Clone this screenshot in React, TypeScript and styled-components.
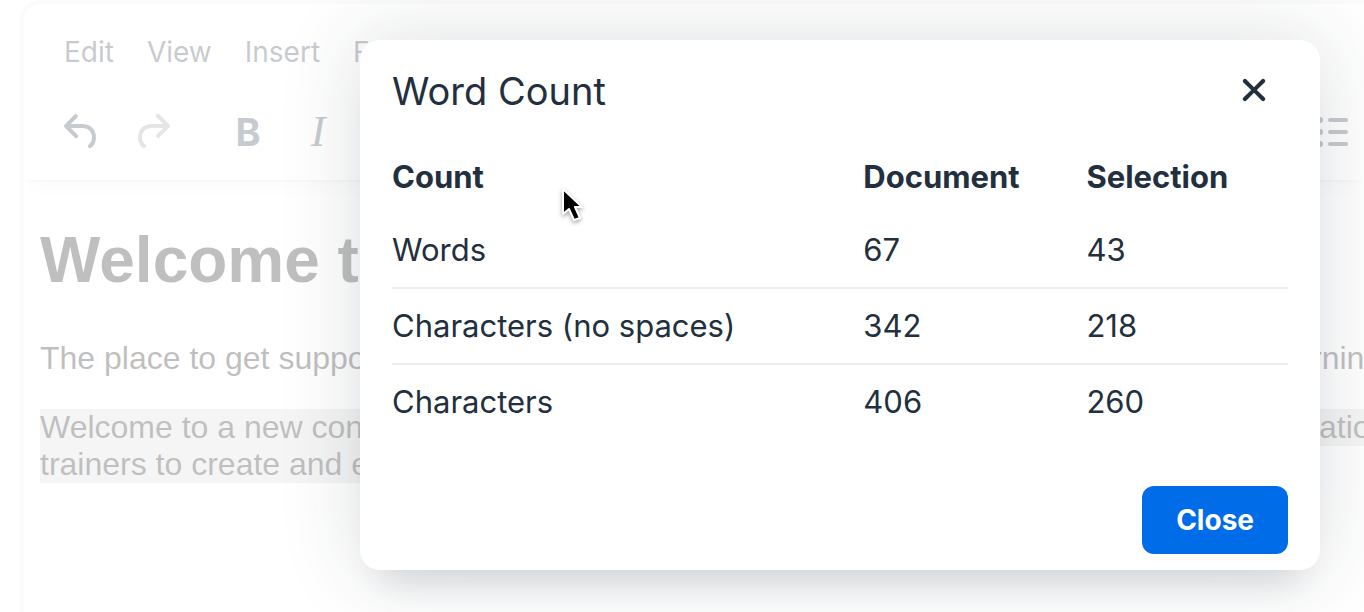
import React from "react";
import styled, { createGlobalStyle } from "styled-components";

const ink = "#222f3e";

const GlobalStyle = createGlobalStyle`
  *, *::before, *::after { box-sizing: border-box; }
  html { overflow: hidden; background: #fff; }
  body {
    margin: 0;
    color: ${ink};
    font-family: Inter, "Liberation Sans", sans-serif;
  }
`;

const Page = styled.div`
  position: relative;
  display: flex;
  min-height: 100vh;
  overflow: hidden;
`;

const Editor = styled.main`
  flex: 1;
  min-width: 0;
  margin-left: 20px;
  border: 4px solid #eee;
  border-width: 4px 0 0 4px;
  border-top-left-radius: 20px;
`;

const EditorHeader = styled.header`
  padding: 12px 0 4px 24px;
  box-shadow: 0 4px 4px -4px rgba(34, 47, 62, 0.2), 0 16px 16px -8px rgba(34, 47, 62, 0.07);
`;

const MenuBar = styled.nav`
  display: flex;
  height: 72px;
  padding-left: 16px;
  gap: 33px;
`;

const MenuButton = styled.button`
  padding: 0;
  border: 0;
  background: none;
  color: inherit;
  font: 400 28px/36px Inter, sans-serif;
`;

const Toolbar = styled.div`
  display: flex;
  align-items: center;
  height: 88px;
  padding-right: 4px;
`;

const ToolGroup = styled.div<{ $end?: boolean }>`
  display: flex;
  gap: 2px;
  margin-left: ${(p) => (p.$end ? "auto" : "0")};
  margin-right: ${(p) => (p.$end ? "0" : "28px")};
`;

const ToolButton = styled.button<{ $narrow?: boolean }>`
  display: flex;
  align-items: center;
  justify-content: center;
  width: ${(p) => (p.$narrow ? 56 : 68)}px;
  height: 68px;
  padding: 0;
  border: 0;
  background: none;
  color: inherit;

  &:disabled { opacity: 0.5; }
`;

const BoldMark = styled.b`
  font: 700 38px/48px Inter, sans-serif;
`;

const ItalicMark = styled.i`
  font: italic 400 44px/48px "Liberation Serif", serif;
`;

const Content = styled.article`
  padding: 42px 0 32px 16px;
  color: #000;
  font: 400 32px/37px "Liberation Sans", Arial, sans-serif;
`;

const Heading = styled.h1`
  margin: 0;
  font-size: 64px;
  line-height: 76px;
`;

const Paragraph = styled.p`
  margin: 32px 0 0;

  h1 + & { margin-top: 42px; }
`;

const Line = styled.span<{ $selected?: boolean; $short?: boolean }>`
  display: flex;
  justify-content: space-between;
  width: ${(p) => (p.$short ? "60%" : "auto")};
  background: ${(p) => (p.$selected ? "#d8d8d8" : "none")};
  white-space: nowrap;
`;

const Tail = styled.span<{ $width: number }>`
  width: ${(p) => p.$width}px;
  overflow: hidden;
`;

const Overlay = styled.div`
  position: absolute;
  inset: 0;
  display: flex;
  align-items: flex-start;
  justify-content: flex-end;
  padding: 40px 44px;
  background: rgba(255, 255, 255, 0.75);
`;

const Dialog = styled.section`
  position: relative;
  width: 100%;
  max-width: 960px;
  border-radius: 20px;
  background: #fff;
  box-shadow: 0 32px 32px -20px rgba(34, 47, 62, 0.13), 0 0 80px 2px rgba(34, 47, 62, 0.15);
`;

const DialogHeader = styled.header`
  display: flex;
  align-items: center;
  justify-content: space-between;
  padding: 16px 32px 0;
`;

const Title = styled.h2`
  margin: 0;
  padding-top: 2px;
  font-size: 38px;
  font-weight: 400;
  line-height: 52px;
`;

const IconButton = styled.button`
  display: flex;
  align-items: center;
  justify-content: center;
  width: 68px;
  height: 68px;
  padding: 0;
  border: 0;
  background: none;
  color: inherit;
`;

const DialogBody = styled.div`
  padding: 16px 32px;
`;

const CountTable = styled.table`
  width: 100%;
  border-collapse: collapse;
  table-layout: fixed;
  font-size: 31px;
  line-height: 42px;
  text-align: left;

  th { padding: 16px 0 15px; }
  td { padding: 16px 0; }
  tbody tr + tr { border-top: 2px solid #ececec; }
`;

const Column = styled.col<{ $share: number }>`
  width: ${(p) => p.$share}%;
`;

const DialogFooter = styled.footer`
  display: flex;
  justify-content: flex-end;
  padding: 31px 32px 16px;
`;

const PrimaryButton = styled.button`
  height: 68px;
  padding: 0 34px;
  border: 0;
  border-radius: 12px;
  background: #006ce7;
  color: #fff;
  font: 700 28px/48px Inter, sans-serif;
`;

const Pointer = styled.svg`
  position: absolute;
  top: 143px;
  left: 198px;
  filter: drop-shadow(0 2px 2px rgba(0, 0, 0, 0.35));
`;

const menus = ["Edit", "View", "Insert", "Format"];

const rows = [
  { label: "Words", document: 67, selection: 43 },
  { label: "Characters (no spaces)", document: 342, selection: 218 },
  { label: "Characters", document: 406, selection: 260 },
];

const Icon = ({ children }: { children: React.ReactNode }) => (
  <svg width="48" height="48" viewBox="0 0 24 24" fill="currentColor" aria-hidden="true">
    {children}
  </svg>
);

export default function App() {
  return (
    <>
      <GlobalStyle />
      <Page>
        <Editor>
          <EditorHeader>
            <MenuBar>
              {menus.map((menu) => (
                <MenuButton key={menu} type="button">{menu}</MenuButton>
              ))}
            </MenuBar>
            <Toolbar>
              <ToolGroup>
                <ToolButton type="button" aria-label="Undo">
                  <Icon>
                    <path d="M6.4 8H12c3.7 0 6.2 2 6.8 5.1.6 2.7-.4 5.6-2.3 6.8a1 1 0 0 1-1-1.8c1.1-.6 1.8-2.7 1.4-4.6-.5-2.1-2.1-3.5-4.9-3.5H6.4l3.3 3.3a1 1 0 1 1-1.4 1.4l-5-5a1 1 0 0 1 0-1.4l5-5a1 1 0 0 1 1.4 1.4L6.4 8z" />
                  </Icon>
                </ToolButton>
                <ToolButton type="button" aria-label="Redo" disabled>
                  <Icon>
                    <path d="M17.6 10H12c-2.8 0-4.4 1.4-4.9 3.5-.4 2 .3 4 1.4 4.6a1 1 0 1 1-1 1.8c-2-1.2-2.9-4.1-2.3-6.8.6-3 3-5.1 6.8-5.1h5.6l-3.3-3.3a1 1 0 1 1 1.4-1.4l5 5a1 1 0 0 1 0 1.4l-5 5a1 1 0 0 1-1.4-1.4l3.3-3.3z" />
                  </Icon>
                </ToolButton>
              </ToolGroup>
              <ToolGroup>
                <ToolButton type="button" aria-label="Bold"><BoldMark>B</BoldMark></ToolButton>
                <ToolButton type="button" aria-label="Italic"><ItalicMark>I</ItalicMark></ToolButton>
              </ToolGroup>
              <ToolGroup $end>
                <ToolButton type="button" aria-label="Bullet list" $narrow>
                  <Icon>
                    <rect x="10" y="5" width="10" height="2" rx="1" />
                    <rect x="10" y="11" width="10" height="2" rx="1" />
                    <rect x="10" y="17" width="10" height="2" rx="1" />
                    <circle cx="6" cy="6" r="1.5" />
                    <circle cx="6" cy="12" r="1.5" />
                    <circle cx="6" cy="18" r="1.5" />
                  </Icon>
                </ToolButton>
              </ToolGroup>
            </Toolbar>
          </EditorHeader>
          <Content>
            <Heading>Welcome to</Heading>
            <Paragraph>
              <Line>
                <span>The place to get support</span>
                <Tail $width={53}>rning</Tail>
              </Line>
            </Paragraph>
            <Paragraph>
              <Line $selected>
                <span>Welcome to a new cont</span>
                <Tail $width={45}>ation</Tail>
              </Line>
              <Line $selected $short>trainers to create and e</Line>
            </Paragraph>
          </Content>
        </Editor>
        <Overlay>
          <Dialog role="dialog" aria-labelledby="dialog-title">
            <DialogHeader>
              <Title id="dialog-title">Word Count</Title>
              <IconButton type="button" aria-label="Close dialog">
                <Icon>
                  <path d="M17.3 8.2 13.4 12l3.9 3.8a1 1 0 0 1-1.5 1.5L12 13.4l-3.8 3.9a1 1 0 0 1-1.5-1.5l3.9-3.8-3.9-3.8a1 1 0 0 1 1.5-1.5l3.8 3.9 3.8-3.9a1 1 0 0 1 1.5 1.5Z" />
                </Icon>
              </IconButton>
            </DialogHeader>
            <DialogBody>
              <CountTable>
                <colgroup>
                  <Column $share={52.6} />
                  <Column $share={24.9} />
                  <Column $share={22.5} />
                </colgroup>
                <thead>
                  <tr>
                    <th scope="col">Count</th>
                    <th scope="col">Document</th>
                    <th scope="col">Selection</th>
                  </tr>
                </thead>
                <tbody>
                  {rows.map((row) => (
                    <tr key={row.label}>
                      <td>{row.label}</td>
                      <td>{row.document}</td>
                      <td>{row.selection}</td>
                    </tr>
                  ))}
                </tbody>
              </CountTable>
            </DialogBody>
            <DialogFooter>
              <PrimaryButton type="button">Close</PrimaryButton>
            </DialogFooter>
            <Pointer width="32" height="44" viewBox="0 0 32 44" aria-hidden="true">
              <path
                d="M5 6v25l6-5 5 11 6-2-5-11h7z"
                fill="#000"
                stroke="#fff"
                strokeWidth="2"
                strokeLinejoin="round"
              />
            </Pointer>
          </Dialog>
        </Overlay>
      </Page>
    </>
  );
}
